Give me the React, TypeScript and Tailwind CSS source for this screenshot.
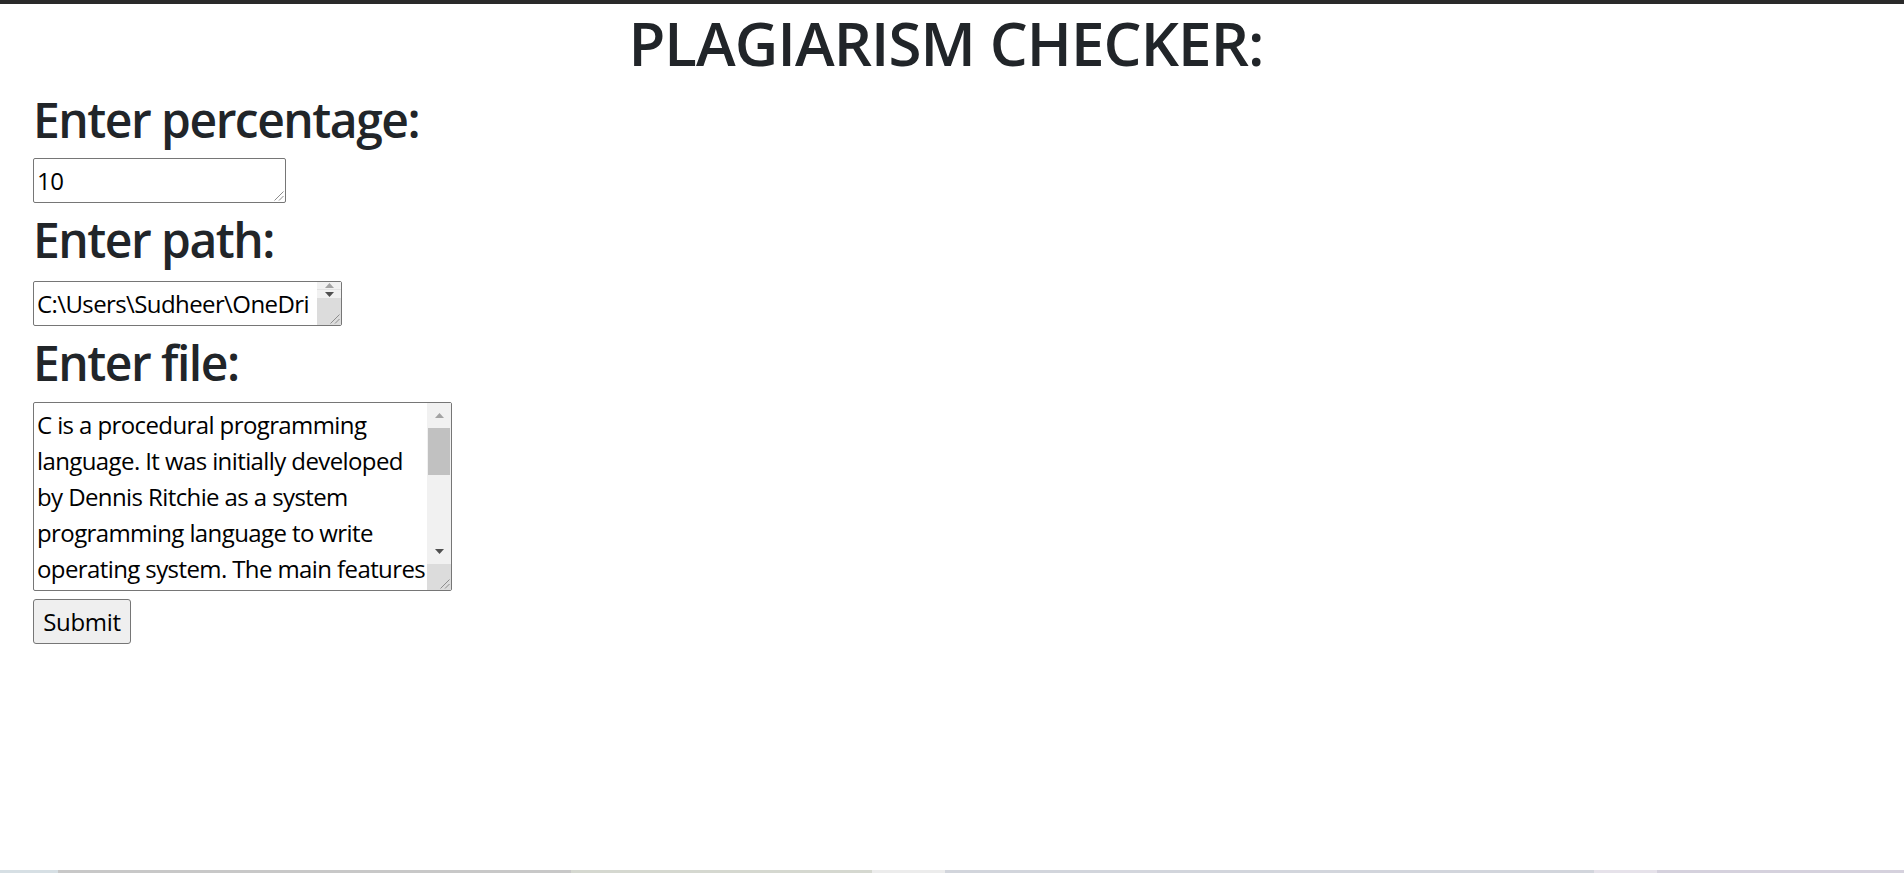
import type { ReactNode } from "react";

const fileLines = [
  "C is a procedural programming",
  "language. It was initially developed",
  "by Dennis Ritchie as a system",
  "programming language to write",
  "operating system. The main features",
];

function Grip() {
  return (
    <svg width="12" height="12" viewBox="0 0 12 12" className="block">
      <path d="M11.5 2.5 L2.5 11.5 M11.5 7 L7 11.5" stroke="#8c8c8c" strokeWidth="1" />
    </svg>
  );
}

function Arrow({ up, color }: { up?: boolean; color: string }) {
  return (
    <svg width="9" height="5" viewBox="0 0 9 5" className="block">
      <polygon points={up ? "0,5 9,5 4.5,0" : "0,0 9,0 4.5,5"} fill={color} />
    </svg>
  );
}

function Field({
  width,
  height,
  children,
  scroll,
}: {
  width: string;
  height: string;
  children: ReactNode;
  scroll?: ReactNode;
}) {
  return (
    <div className={`flex rounded-[2px] border border-[#767676] bg-white ${width} ${height}`}>
      <div className="flex flex-1 flex-col overflow-hidden pl-[3px] pt-[4px] text-[24px] leading-[36px] tracking-[-0.6px] text-black">
        {children}
      </div>
      {scroll}
    </div>
  );
}

export default function App() {
  return (
    <div className="flex min-h-screen flex-col bg-white font-['Open_Sans',sans-serif] text-[#212529]">
      <div className="h-1 bg-[#2a2a2a]" />

      <h1 className="mt-[3px] pr-[12px] text-center text-[60px] font-semibold leading-[72px] tracking-[-0.9px]">
        PLAGIARISM CHECKER:
      </h1>

      <div className="flex flex-1 flex-col items-start pl-[33px]">
        {/* percentage */}
        <h2 className="mt-[12px] mb-[9px] text-[48px] font-semibold leading-[58px] tracking-[-1.5px]">
          Enter percentage:
        </h2>
        <div className="flex h-[45px] w-[253px] rounded-[2px] border border-[#767676] bg-white">
          <div className="flex-1 overflow-hidden pl-[3px] pt-[4px] text-[24px] leading-[36px] tracking-[-0.45px] text-black">
            10
          </div>
          <div className="flex items-end pb-[1px] pr-[1px]">
            <Grip />
          </div>
        </div>

        {/* path */}
        <h2 className="mt-[8px] mb-[12px] text-[48px] font-semibold leading-[58px] tracking-[-1.5px]">
          Enter path:
        </h2>
        <Field
          width="w-[309px]"
          height="h-[45px]"
          scroll={
            <div className="flex w-[24px] flex-col bg-[#f1f1f1]">
              <div className="flex h-[8px] items-center justify-center border-b border-[#e2e2e2]">
                <Arrow up color="#a3a3a3" />
              </div>
              <div className="flex h-[8px] items-center justify-center">
                <Arrow color="#505050" />
              </div>
              <div className="flex flex-1 items-end justify-end bg-[#dcdcdc] pb-[1px] pr-[1px]">
                <Grip />
              </div>
            </div>
          }
        >
          <div className="whitespace-nowrap">C:\Users\Sudheer\OneDri</div>
        </Field>

        {/* file contents */}
        <h2 className="mt-[8px] mb-[10px] text-[48px] font-semibold leading-[58px] tracking-[-1.5px]">
          Enter file:
        </h2>
        <Field
          width="w-[419px]"
          height="h-[189px]"
          scroll={
            <div className="flex w-[24px] flex-col bg-[#f1f1f1]">
              <div className="flex h-[25px] items-center justify-center">
                <Arrow up color="#a3a3a3" />
              </div>
              <div className="mx-[1px] h-[47px] bg-[#c1c1c1]" />
              <div className="flex-1" />
              <div className="flex h-[25px] items-center justify-center">
                <Arrow color="#505050" />
              </div>
              <div className="flex h-[26px] items-end justify-end bg-[#dcdcdc] pb-[1px] pr-[1px]">
                <Grip />
              </div>
            </div>
          }
        >
          {fileLines.map((line) => (
            <div key={line} className="whitespace-nowrap">
              {line}
            </div>
          ))}
        </Field>

        <button className="mt-[8px] h-[45px] w-[98px] rounded-[3px] border border-[#767676] bg-[#efefef] text-[24px] leading-[36px] tracking-[-0.3px] text-black">
          Submit
        </button>
      </div>

      {/* bottom edge strip */}
      <div className="flex h-[3px]">
        <div className="w-[58px] bg-[#d6dfe4]" />
        <div className="w-[513px] bg-[#c8c8c8]" />
        <div className="w-[301px] bg-[#d5d8d0]" />
        <div className="w-[73px] bg-[#ececec]" />
        <div className="w-[649px] bg-[#d2d5dc]" />
        <div className="w-[63px] bg-[#e6e2ea]" />
        <div className="flex-1 bg-[#d5d1dd]" />
      </div>
    </div>
  );
}
